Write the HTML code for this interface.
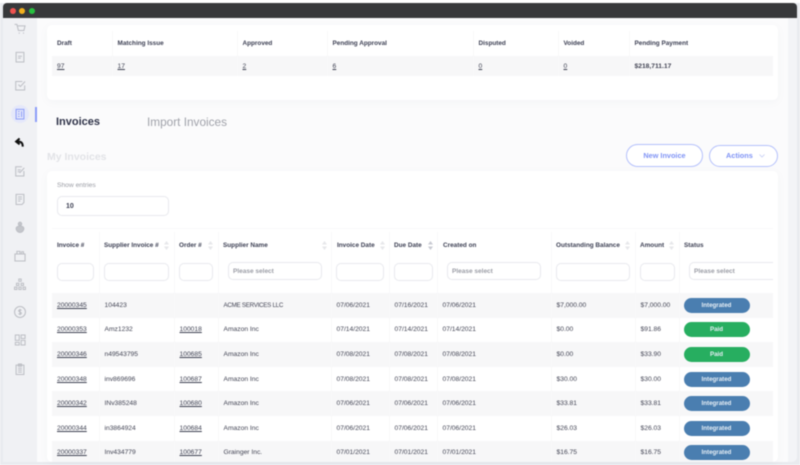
<!DOCTYPE html>
<html><head><meta charset="utf-8"><style>
*{box-sizing:border-box}
html,body{margin:0;padding:0;width:800px;height:465px;overflow:hidden;background:#fff}
body{font-family:"Liberation Sans",sans-serif;color:#3c3f50;font-size:6.7px}
#root{position:absolute;left:0;top:0;width:800px;height:465px;overflow:hidden;filter:blur(.4px);background:#e9ebef}
.a{position:absolute}
#top{left:0;top:0;width:800px;height:3px;background:#fff}
#bar{left:3px;top:3px;width:794px;height:15px;background:#38393b;border-radius:4px 4px 0 0}
.dot{position:absolute;top:8px;width:6px;height:6px;border-radius:50%}
#win{left:3px;top:18px;width:794px;height:444px;background:#f3f4f7;border-radius:0 0 5px 5px;overflow:hidden}
#side{left:3px;top:18px;width:34px;height:444px;background:#f0f1f4}
#main{left:37px;top:18px;width:751px;height:444px;background:#fbfbfc}
.card{background:#fff;border-radius:5px;box-shadow:0 2px 8px rgba(120,130,160,.06)}
table{border-collapse:collapse;table-layout:fixed;position:absolute}
td{padding:0 0 0 5px;white-space:nowrap;overflow:hidden;border-left:1px solid #f8f8f9;font-size:6.7px;color:#424454}
td:first-child{border-left:0}
u{color:#3c3f50}
.th td{font-weight:bold;color:#3d4054;font-size:6.4px}
.g td{background:#f7f7f8}
.ipt{position:absolute;top:263px;height:18px;background:#fff;border:1px solid #e8e9ee;border-radius:5px;font-size:6.5px;color:#9a9ca5;line-height:17px;padding-left:4px;font-weight:bold}
.h{position:absolute;top:242px;font-size:6.4px;font-weight:bold;color:#3d4054;line-height:8px;white-space:nowrap}
.sort{position:absolute;top:241px;width:5px;height:9px}
.b{display:block;width:66px;height:15px;margin-left:-1px;border-radius:8px;color:#e6eef5;font-size:6.2px;font-weight:bold;text-align:center;line-height:15px;background:#4a7eb0}
.p{background:#27ae60}
.btn{position:absolute;border:1px solid #b4c0fb;border-radius:12px;background:#fff;color:#7f93f5;font-weight:bold;font-size:7.3px;text-align:center}
svg.i{position:absolute;left:13px;width:14px;height:14px;fill:none;stroke:#bcbec4;stroke-width:1.3}
.vl{position:absolute;width:1px;background:#f9f9fa;top:232px;height:61px}
</style></head><body><div id="root">
<div class="a" id="top"></div>
<div class="a" id="win"></div>
<div class="a" id="side"></div>
<div class="a" id="main"></div>
<div class="a" id="bar"></div>
<div class="dot" style="left:10px;background:#ef5350"></div>
<div class="dot" style="left:19px;background:#f2b01e"></div>
<div class="dot" style="left:29px;background:#27c13f"></div>

<div class="a" style="left:11px;top:105px;width:18px;height:18px;border-radius:50%;background:#e5e8fa"></div>
<div class="a" style="left:35px;top:107px;width:2px;height:15px;background:#8b9cf8"></div>

<svg class="i" style="top:22px" viewBox="0 0 18 18"><path d="M2 3h3l2 8h7l1.500-6H6M8 13.500v1.500M13.500 13.500v1.500"/></svg>
<svg class="i" style="top:50px" viewBox="0 0 18 18"><path d="M4 3h10v12.500H4zM6.500 8h5M6.500 10.500h3.500"/></svg>
<svg class="i" style="top:78px" viewBox="0 0 18 18"><path d="M15 9.500V15.500H3.500V4.500H12M7 8.500l2.500 2.500L15.500 4.500"/></svg>
<svg class="i" style="top:107px;stroke:#8b9cf8" viewBox="0 0 18 18"><path d="M4 3h10v12.500H4zM6.500 6h2M6.500 9h2M6.500 12h2M11 5.500v7.500"/></svg>
<svg class="i" style="top:135px;stroke:#111;stroke-width:2.600" viewBox="0 0 18 18"><path d="M8.500 4.500L4 8.500 8.500 12M4.500 8.500c5-.5 8 .5 8 6.500"/></svg>
<svg class="i" style="top:164px" viewBox="0 0 18 18"><path d="M14 9v6.500H3.500V3.500h8M6 7.500h4M6 10h3M8.500 11.500l6-6.500"/></svg>
<svg class="i" style="top:192px" viewBox="0 0 18 18"><path d="M4 3h10v10.500L11.500 16H4zM6.500 6.500h5M6.500 9h5M6.500 11.500h3"/></svg>
<svg class="i" style="top:220px;fill:#c4c6cb" viewBox="0 0 18 18"><circle cx="9" cy="5" r="2.200"/><path d="M4 11a5 5 0 0 0 10 0c0-2-2-3.300-5-3.300s-5 1.300-5 3.300z"/></svg>
<svg class="i" style="top:249px" viewBox="0 0 18 18"><path d="M2.500 6.500h13v9h-13zM5 6.500V3h4v3.500M11 6.500V3.500h2.500v3"/></svg>
<svg class="i" style="top:277px" viewBox="0 0 18 18"><path d="M7.500 2.500h3v3h-3zM4.500 8h3v3h-3zM10.500 8h3v3h-3zM2 13h3v3H2zM7.500 13h3v3h-3zM13 13h3v3h-3z"/></svg>
<svg class="i" style="top:305px" viewBox="0 0 18 18"><circle cx="9" cy="9" r="7"/><path d="M11 7c-.5-1-3.500-1.200-3.800.3C7 9 11 8.800 10.800 10.700c-.2 1.500-3.300 1.300-3.800.3M9 5v8"/></svg>
<svg class="i" style="top:333px" viewBox="0 0 18 18"><path d="M3 2.500h5v7H3zM10.500 2.500h5v4.500h-5zM10.500 9.500h5v6h-5zM3 12h5v3.500H3z"/></svg>
<svg class="i" style="top:362px" viewBox="0 0 18 18"><path d="M4 4h10v12H4zM7 2.500h4v3H7zM6.500 8h5M6.500 10.500h5M6.500 13h5"/></svg>

<div class="a card" style="left:47px;top:25px;width:731px;height:75px"></div>
<table style="left:52px;top:31px;width:721px">
<colgroup><col style="width:60px"><col style="width:125px"><col style="width:90px"><col style="width:146px"><col style="width:85px"><col style="width:71px"><col style="width:144px"></colgroup>
<tr class="th" style="height:25px"><td>Draft</td><td>Matching Issue</td><td>Approved</td><td>Pending Approval</td><td>Disputed</td><td>Voided</td><td>Pending Payment</td></tr>
<tr class="g" style="height:20px"><td><u>97</u></td><td><u>17</u></td><td><u>2</u></td><td><u>6</u></td><td><u>0</u></td><td><u>0</u></td><td style="font-weight:bold">$218,711.17</td></tr>
</table>

<div class="a" style="left:56px;top:114px;font-size:11px;font-weight:bold;color:#2e3248;line-height:16px">Invoices</div>
<div class="a" style="left:147px;top:114px;font-size:11.8px;color:#a0a2aa;line-height:16px">Import Invoices</div>
<div class="a" style="left:47px;top:150px;font-size:10.5px;font-weight:bold;color:#e2e3e7;line-height:14px">My Invoices</div>

<div class="btn" style="left:626px;top:144px;width:77px;height:23px;line-height:21px">New Invoice</div>
<div class="btn" style="left:709px;top:145px;width:69px;height:22px;line-height:20px;text-align:left;padding-left:16px">Actions</div>
<svg class="a" style="left:759px;top:154px" width="6" height="4" viewBox="0 0 6 4"><path d="M.5.5L3 3 5.500.5" fill="none" stroke="#c5cdf5" stroke-width=".8"/></svg>

<div class="a card" style="left:47px;top:171px;width:731px;height:291px"></div>
<div class="a" style="left:57px;top:182px;font-size:6.7px;color:#9a9ca4;line-height:8px">Show entries</div>
<div class="a" style="left:57px;top:196px;width:112px;height:20px;border:1px solid #e8e9ee;border-radius:5px;font-size:7px;font-weight:bold;color:#3d4054;line-height:19px;padding-left:8px">10</div>
<div class="a" style="left:52px;top:228px;width:721px;height:1px;background:#f9f9fa"></div>

<div class="vl" style="left:99px"></div><div class="vl" style="left:174px"></div><div class="vl" style="left:218px"></div><div class="vl" style="left:331px"></div><div class="vl" style="left:389px"></div><div class="vl" style="left:437px"></div><div class="vl" style="left:551px"></div><div class="vl" style="left:635px"></div><div class="vl" style="left:679px"></div>

<div class="h" style="left:57px">Invoice #</div>
<div class="h" style="left:104px">Supplier Invoice #</div>
<div class="h" style="left:179px">Order #</div>
<div class="h" style="left:223px">Supplier Name</div>
<div class="h" style="left:337px">Invoice Date</div>
<div class="h" style="left:394px">Due Date</div>
<div class="h" style="left:443px">Created on</div>
<div class="h" style="left:556px">Outstanding Balance</div>
<div class="h" style="left:640px">Amount</div>
<div class="h" style="left:684px">Status</div>

<svg class="sort" style="left:164px" viewBox="0 0 5 9"><path d="M2.500 0L5 3.500H0zM2.500 9L0 5.500h5z" fill="#e6e7ea"/></svg>
<svg class="sort" style="left:208px" viewBox="0 0 5 9"><path d="M2.500 0L5 3.500H0zM2.500 9L0 5.500h5z" fill="#e6e7ea"/></svg>
<svg class="sort" style="left:322px" viewBox="0 0 5 9"><path d="M2.500 0L5 3.500H0zM2.500 9L0 5.500h5z" fill="#e6e7ea"/></svg>
<svg class="sort" style="left:380px" viewBox="0 0 5 9"><path d="M2.500 0L5 3.500H0zM2.500 9L0 5.500h5z" fill="#e6e7ea"/></svg>
<svg class="sort" style="left:428px" viewBox="0 0 5 9"><path d="M2.500 0L5 3.500H0zM2.500 9L0 5.500h5z" fill="#c8cad2"/></svg>
<svg class="sort" style="left:625px" viewBox="0 0 5 9"><path d="M2.500 0L5 3.500H0zM2.500 9L0 5.500h5z" fill="#e6e7ea"/></svg>
<svg class="sort" style="left:669px" viewBox="0 0 5 9"><path d="M2.500 0L5 3.500H0zM2.500 9L0 5.500h5z" fill="#e6e7ea"/></svg>

<div class="ipt" style="left:57px;width:37px"></div>
<div class="ipt" style="left:104px;width:65px"></div>
<div class="ipt" style="left:179px;width:34px"></div>
<div class="ipt" style="left:228px;width:94px;top:262px">Please select</div>
<div class="ipt" style="left:336px;width:48px"></div>
<div class="ipt" style="left:394px;width:39px"></div>
<div class="ipt" style="left:447px;width:94px;top:262px">Please select</div>
<div class="ipt" style="left:556px;width:74px"></div>
<div class="ipt" style="left:640px;width:35px"></div>
<div class="ipt" style="left:689px;width:84px;top:262px;border-right:0;border-radius:5px 0 0 5px">Please select</div>

<div class="a" style="left:52px;top:293px;width:721px;height:169px;overflow:hidden">
<table style="left:0;top:0;width:721px">
<colgroup><col style="width:47px"><col style="width:75px"><col style="width:44px"><col style="width:113px"><col style="width:58px"><col style="width:48px"><col style="width:114px"><col style="width:84px"><col style="width:44px"><col style="width:94px"></colgroup>
<tr class="g" style="height:24.600px"><td><u>20000345</u></td><td>104423</td><td></td><td><span style="letter-spacing:-.25px;font-size:6.2px">ACME SERVICES LLC</span></td><td>07/06/2021</td><td>07/16/2021</td><td>07/06/2021</td><td>$7,000.00</td><td>$7,000.00</td><td><span class="b">Integrated</span></td></tr>
<tr style="height:24.600px"><td><u>20000353</u></td><td>Amz1232</td><td><u>100018</u></td><td>Amazon Inc</td><td>07/14/2021</td><td>07/14/2021</td><td>07/14/2021</td><td>$0.00</td><td>$91.86</td><td><span class="b p">Paid</span></td></tr>
<tr class="g" style="height:24.600px"><td><u>20000346</u></td><td>n49543795</td><td><u>100685</u></td><td>Amazon Inc</td><td>07/08/2021</td><td>07/08/2021</td><td>07/08/2021</td><td>$0.00</td><td>$33.90</td><td><span class="b p">Paid</span></td></tr>
<tr style="height:24.600px"><td><u>20000348</u></td><td>inv869696</td><td><u>100687</u></td><td>Amazon Inc</td><td>07/08/2021</td><td>07/08/2021</td><td>07/08/2021</td><td>$30.00</td><td>$30.00</td><td><span class="b">Integrated</span></td></tr>
<tr class="g" style="height:24.600px"><td><u>20000342</u></td><td>INv385248</td><td><u>100680</u></td><td>Amazon Inc</td><td>07/06/2021</td><td>07/06/2021</td><td>07/06/2021</td><td>$33.81</td><td>$33.81</td><td><span class="b">Integrated</span></td></tr>
<tr style="height:24.600px"><td><u>20000344</u></td><td>in3864924</td><td><u>100684</u></td><td>Amazon Inc</td><td>07/06/2021</td><td>07/06/2021</td><td>07/06/2021</td><td>$26.03</td><td>$26.03</td><td><span class="b">Integrated</span></td></tr>
<tr class="g" style="height:24.600px"><td><u>20000337</u></td><td>Inv434779</td><td><u>100677</u></td><td>Grainger Inc.</td><td>07/01/2021</td><td>07/01/2021</td><td>07/01/2021</td><td>$16.75</td><td>$16.75</td><td><span class="b">Integrated</span></td></tr>
</table>
</div>
</div></body></html>
